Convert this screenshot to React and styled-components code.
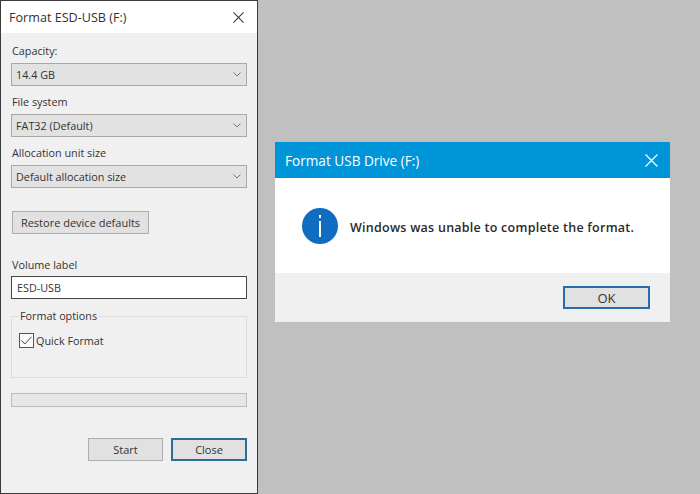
import React from 'react';
import styled, { createGlobalStyle } from 'styled-components';

const Global = createGlobalStyle`
  html, body { margin: 0; padding: 0; background: #c0c0c0; }
  body { font-family: "Open Sans", "Noto Sans", "Liberation Sans", sans-serif; color: #222; }
`;

const Page = styled.div`
  width: 700px;
  height: 494px;
  display: flex;
  align-items: flex-start;
  gap: 17px;
  overflow: hidden;
`;

const FormatWindow = styled.div`
  box-sizing: border-box;
  width: 258px;
  height: 494px;
  border: 1px solid #3a3a3a;
  background: #f0f0f0;
  display: flex;
  flex-direction: column;
`;

const TitleBar = styled.div`
  height: 32px;
  flex: none;
  background: #fff;
  display: flex;
  align-items: center;
  justify-content: space-between;
  padding: 0 13px 0 8px;
  font-size: 12.6px;
  color: #333;
`;

const Content = styled.div`
  display: flex;
  flex-direction: column;
  padding: 10px 10px 0;
`;

const Label = styled.div`
  font-size: 10.8px;
  line-height: 16px;
  height: 16px;
  margin: ${p => p.$top || 0}px 0 ${p => p.$bottom ?? 4}px 1px;
  color: #333;
`;

const Select = styled.div`
  box-sizing: border-box;
  height: 23px;
  border: 1px solid #a8a8a8;
  background: #e2e2e2;
  display: flex;
  align-items: center;
  justify-content: space-between;
  padding: 0 5px 0 4px;
  font-size: 10.8px;
  color: #333;
`;

const PlainButton = styled.div`
  box-sizing: border-box;
  height: 23px;
  width: ${p => p.$width}px;
  border: ${p => (p.$ring ? `2px solid ${p.$ring}` : '1px solid #adadad')};
  background: #e1e1e1;
  display: flex;
  align-items: center;
  justify-content: center;
  font-size: ${p => p.$size || 11}px;
  color: #333;
`;

const RestoreRow = styled.div`
  margin: 23px 0 0 1px;
`;

const TextInput = styled.div`
  box-sizing: border-box;
  height: 23px;
  border: 1px solid #444;
  background: #fff;
  display: flex;
  align-items: center;
  padding-left: 5px;
  font-size: 10.8px;
  color: #333;
`;

const Group = styled.div`
  box-sizing: border-box;
  position: relative;
  height: 62px;
  margin-top: 17px;
  border: 1px solid #dcdcdc;
  padding: 16px 0 0 7px;
`;

const Legend = styled.span`
  position: absolute;
  left: 7px;
  top: -9px;
  padding: 0 1px;
  background: #f0f0f0;
  font-size: 10.8px;
  line-height: 16px;
  color: #333;
`;

const CheckRow = styled.div`
  display: flex;
  align-items: center;
  gap: 2px;
  font-size: 10.8px;
  color: #333;
`;

const CheckBox = styled.div`
  box-sizing: border-box;
  width: 15px;
  height: 15px;
  border: 1px solid #555;
  background: #fafafa;
  display: flex;
  align-items: center;
  justify-content: center;
`;

const Progress = styled.div`
  box-sizing: border-box;
  height: 14px;
  margin-top: 15px;
  border: 1px solid #bcbcbc;
  background: #e6e6e6;
`;

const ButtonRow = styled.div`
  display: flex;
  justify-content: flex-end;
  gap: 8px;
  margin-top: 31px;
`;

const Dialog = styled.div`
  box-sizing: border-box;
  width: 395px;
  height: 180px;
  margin-top: 142px;
  background: #fff;
  display: flex;
  flex-direction: column;
`;

const DialogTitle = styled.div`
  height: 36px;
  flex: none;
  background: #0095d8;
  color: #fff;
  display: flex;
  align-items: center;
  justify-content: space-between;
  padding: 0 12px 0 10px;
  font-size: 13.6px;
`;

const DialogBody = styled.div`
  flex: 1;
  display: flex;
  align-items: center;
  gap: 12px;
  padding: 0 0 0 27px;
`;

const Message = styled.div`
  margin-top: 3px;
  font-size: 12.5px;
  font-weight: 600;
  letter-spacing: 0.25px;
  color: #2a2a2a;
`;

const DialogFooter = styled.div`
  height: 49px;
  flex: none;
  background: #f0f0f0;
  display: flex;
  align-items: center;
  justify-content: flex-end;
  padding: 0 20px 0 0;
`;

const Close = ({ color, size }) => (
  <svg width={size} height={size} viewBox="0 0 12 12">
    <path d="M0.5 0.5L11.5 11.5M11.5 0.5L0.5 11.5" stroke={color} strokeWidth="1.1" fill="none" />
  </svg>
);

const Chevron = () => (
  <svg width="8" height="5" viewBox="0 0 8 5">
    <path d="M0.5 0.5L4 4L7.5 0.5" stroke="#777" strokeWidth="1" fill="none" />
  </svg>
);

const Combo = ({ children }) => (
  <Select>
    {children}
    <Chevron />
  </Select>
);

export default function App() {
  return (
    <Page>
      <Global />
      <FormatWindow>
        <TitleBar>
          Format ESD-USB (F:)
          <Close color="#333" size={11} />
        </TitleBar>
        <Content>
          <Label>Capacity:</Label>
          <Combo>14.4 GB</Combo>
          <Label $top={8}>File system</Label>
          <Combo>FAT32 (Default)</Combo>
          <Label $top={8}>Allocation unit size</Label>
          <Combo>Default allocation size</Combo>
          <RestoreRow>
            <PlainButton $width={137}>Restore device defaults</PlainButton>
          </RestoreRow>
          <Label $top={23} $bottom={3}>Volume label</Label>
          <TextInput>ESD-USB</TextInput>
          <Group>
            <Legend>Format options</Legend>
            <CheckRow>
              <CheckBox>
                <svg width="11" height="9" viewBox="0 0 11 9">
                  <path d="M0.5 4.5L3.8 8L10.5 0.8" stroke="#444" strokeWidth="1" fill="none" />
                </svg>
              </CheckBox>
              Quick Format
            </CheckRow>
          </Group>
          <Progress />
          <ButtonRow>
            <PlainButton $width={75}>Start</PlainButton>
            <PlainButton $width={76} $ring="#2b6f95">Close</PlainButton>
          </ButtonRow>
        </Content>
      </FormatWindow>
      <Dialog>
        <DialogTitle>
          Format USB Drive (F:)
          <Close color="#fff" size={13} />
        </DialogTitle>
        <DialogBody>
          <svg width="36" height="36" viewBox="0 0 36 36">
            <circle cx="18" cy="18" r="18" fill="#0f6cc0" />
            <rect x="17" y="7" width="2" height="3" fill="#fff" />
            <rect x="17" y="13" width="2" height="16" fill="#fff" />
          </svg>
          <Message>Windows was unable to complete the format.</Message>
        </DialogBody>
        <DialogFooter>
          <PlainButton $width={87} $size={13} $ring="#2a6cab">OK</PlainButton>
        </DialogFooter>
      </Dialog>
    </Page>
  );
}
